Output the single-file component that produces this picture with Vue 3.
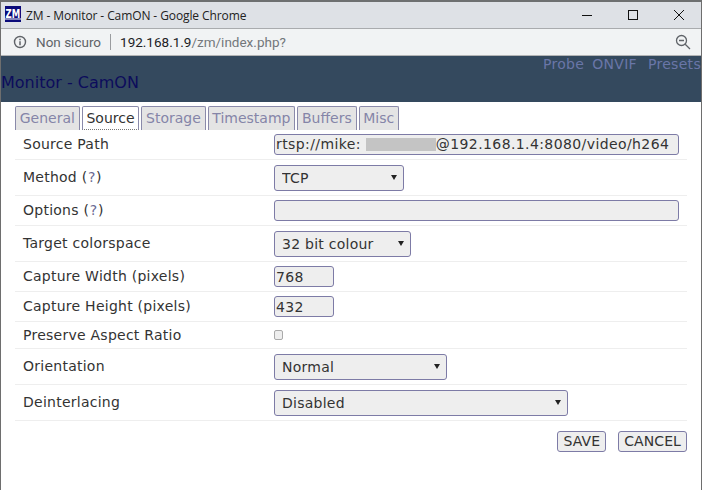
<template>
  <div class="window">
    <div class="titlebar">
      <svg class="zm-logo" width="16" height="16" viewBox="0 0 16 16">
        <rect width="16" height="16" fill="#0a0a7a" />
        <rect y="12.500" width="16" height="1" fill="#fff" />
        <text x="0.500" y="8.400" transform="scale(1 1.400)" class="zm-text">ZM</text>
      </svg>
      <span class="title">ZM - Monitor - CamON - Google Chrome</span>
      <div class="win-btns">
        <svg width="12" height="12" viewBox="0 0 12 12"><path d="M1 6.500h10" stroke="#111" fill="none" /></svg>
        <svg width="12" height="12" viewBox="0 0 12 12"><rect x="1.500" y="1.500" width="9" height="9" stroke="#111" fill="none" /></svg>
        <svg width="12" height="12" viewBox="0 0 12 12"><path d="M1 1l10 10M11 1L1 11" stroke="#111" fill="none" /></svg>
      </div>
    </div>
    <div class="addressbar">
      <svg class="info" width="14" height="14" viewBox="0 0 14 14">
        <circle cx="7" cy="7" r="5.500" stroke="#5f6368" stroke-width="1.400" fill="none" />
        <path d="M7 6.200v4M7 3.800v1.400" stroke="#5f6368" stroke-width="1.500" fill="none" />
      </svg>
      <span class="not-secure">Non sicuro</span>
      <span class="divider"></span>
      <span class="url"><span class="host">192.168.1.9</span>/zm/index.php?</span>
      <svg class="zoom-out" width="16" height="16" viewBox="0 0 16 16">
        <circle cx="6.500" cy="6.500" r="5" stroke="#5f6368" stroke-width="1.300" fill="none" />
        <path d="M4 6.500h5M10.200 10.200L15 15" stroke="#5f6368" stroke-width="1.300" fill="none" />
      </svg>
    </div>

    <div class="page">
      <header class="header">
        <div class="links">
          <a>Probe</a>
          <a>ONVIF</a>
          <a class="presets">Presets</a>
        </div>
        <h2>Monitor - CamON</h2>
      </header>

      <ul class="tabs">
        <li v-for="tab in tabs" :key="tab" :class="{ active: tab === 'Source' }">{{ tab }}</li>
      </ul>

      <div class="form">
        <div class="row r30">
          <span class="label">Source Path</span>
          <div class="field path">rtsp://mike:<span class="redacted"></span>@192.168.1.4:8080/video/h264</div>
        </div>
        <div class="row r36">
          <span class="label">Method (<a>?</a>)</span>
          <div class="sel-wrap w130"><select class="sel"><option>TCP</option></select></div>
        </div>
        <div class="row r30">
          <span class="label">Options (<a>?</a>)</span>
          <input class="field wide" />
        </div>
        <div class="row r36">
          <span class="label">Target colorspace</span>
          <div class="sel-wrap w137"><select class="sel"><option>32 bit colour</option></select></div>
        </div>
        <div class="row r30">
          <span class="label">Capture Width (pixels)</span>
          <input class="field small" value="768" />
        </div>
        <div class="row r30">
          <span class="label">Capture Height (pixels)</span>
          <input class="field small" value="432" />
        </div>
        <div class="row r27">
          <span class="label">Preserve Aspect Ratio</span>
          <input class="check" type="checkbox" />
        </div>
        <div class="row r36">
          <span class="label">Orientation</span>
          <div class="sel-wrap w173"><select class="sel"><option>Normal</option></select></div>
        </div>
        <div class="row r36">
          <span class="label">Deinterlacing</span>
          <div class="sel-wrap w294"><select class="sel"><option>Disabled</option></select></div>
        </div>
      </div>

      <div class="actions">
        <button>SAVE</button>
        <button>CANCEL</button>
      </div>
    </div>
  </div>
</template>

<script setup>
const tabs = ['General', 'Source', 'Storage', 'Timestamp', 'Buffers', 'Misc']
</script>

<style>
html, body {
  margin: 0;
  background: #fff;
}
</style>

<style scoped>
.window {
  width: 702px;
  height: 490px;
  box-sizing: border-box;
  border-left: 1px solid #6e6e6e;
  border-right: 1px solid #6e6e6e;
  border-top: 2px solid #6e7071;
  overflow: hidden;
  background: #fff;
  font-family: "DejaVu Sans", sans-serif;
}

.titlebar {
  height: 27px;
  box-sizing: border-box;
  display: flex;
  align-items: center;
  padding-left: 4px;
  background: #dee1e6;
  border-bottom: 1px solid #a9abae;
  font-family: "Open Sans", sans-serif;
  font-size: 12px;
  letter-spacing: -0.1px;
  color: #222;
}

.zm-logo {
  margin: -2px 5px 0 0;
}

.zm-text {
  font-family: "DejaVu Sans", sans-serif;
  font-size: 8.500px;
  font-weight: bold;
  letter-spacing: 0;
  fill: #fff;
}

.win-btns {
  margin-left: auto;
  display: flex;
  gap: 34px;
  padding-right: 16px;
}

.addressbar {
  height: 27px;
  box-sizing: border-box;
  display: flex;
  align-items: center;
  padding-left: 12px;
  background: #f1f3f4;
  border-bottom: 1px solid #b3b4b5;
  font-family: "Roboto", sans-serif;
  font-size: 13.500px;
}

.not-secure {
  margin-left: 9px;
  color: #5f6368;
}

.divider {
  width: 1px;
  height: 16px;
  margin: 0 9px;
  background: #9a9c9f;
}

.url {
  color: #73777b;
}

.host {
  color: #202124;
}

.zoom-out {
  margin-left: auto;
  margin-right: 10px;
}

.header {
  height: 46px;
  box-sizing: border-box;
  background: #34495e;
}

.links {
  display: flex;
  justify-content: flex-end;
  gap: 8px;
  padding-right: 0;
  font-size: 14px;
  letter-spacing: 0.3px;
  line-height: 16px;
  color: #6a76a8;
}

.presets {
  margin-left: 3px;
}

.header h2 {
  margin: 0;
  font-size: 16px;
  font-weight: normal;
  line-height: 22px;
  color: #0c0c5c;
}

.tabs {
  list-style: none;
  display: flex;
  gap: 2px;
  margin: 0;
  padding: 4px 0 0 14px;
}

.tabs li {
  box-sizing: border-box;
  height: 24px;
  padding: 0 3.750px;
  border: 1px solid #8a8aaa;
  border-bottom: none;
  border-radius: 2px 2px 0 0;
  background: #e4e4e4;
  color: #8585a8;
  font-size: 14px;
  line-height: 22px;
}

.tabs li.active {
  background: #fff;
  color: #333;
  border-bottom: 1px dotted #777;
}

.form {
  margin: 0 14px;
  width: 672px;
}

.row {
  display: grid;
  grid-template-columns: 251px 1fr;
  align-items: center;
  box-sizing: border-box;
  padding-left: 8px;
  border-bottom: 1px solid #eee;
}

.r30 {
  height: 30px;
}

.r36 {
  height: 36px;
}

.r27 {
  height: 27px;
}

.label {
  font-size: 14px;
  letter-spacing: 0.25px;
  color: #333;
  margin-top: -1px;
}

.label a {
  margin: 0 0.500px;
  color: #6a6a94;
}

.field {
  box-sizing: border-box;
  height: 21px;
  padding: 0 1px;
  border: 1px solid #7d7ba6;
  border-radius: 3px;
  background: #eee;
  color: #333;
  font-family: "DejaVu Sans", sans-serif;
  font-size: 14px;
  letter-spacing: 0.4px;
  line-height: 19px;
  outline: none;
}

.path,
.wide {
  width: 405px;
}

.small {
  width: 60px;
}

.redacted {
  display: inline-block;
  width: 70px;
  height: 13px;
  margin-left: 5px;
  vertical-align: -2px;
  background: #c4c4c4;
}

.sel-wrap {
  position: relative;
  height: 26px;
}

.sel-wrap::after {
  content: "";
  position: absolute;
  top: 10px;
  right: 7px;
  border-left: 3px solid transparent;
  border-right: 3px solid transparent;
  border-top: 5px solid #222;
  pointer-events: none;
}

.sel {
  appearance: none;
  box-sizing: border-box;
  display: block;
  width: 100%;
  height: 26px;
  padding: 0 0 0 7px;
  border: 1px solid #7d7ba6;
  border-radius: 3px;
  background-color: #eee;
  color: #333;
  font-family: "DejaVu Sans", sans-serif;
  font-size: 14px;
  letter-spacing: 0.25px;
}

.w130 {
  width: 130px;
}

.w137 {
  width: 137px;
}

.w173 {
  width: 173px;
}

.w294 {
  width: 294px;
}

.check {
  appearance: none;
  box-sizing: border-box;
  width: 9px;
  height: 10px;
  margin: 0;
  border: 1px solid #aaa;
  border-radius: 2px;
  background: #eee;
}

.actions {
  display: flex;
  justify-content: flex-end;
  gap: 12px;
  width: 672px;
  margin: 10px 14px 0;
}

.actions button {
  box-sizing: border-box;
  height: 21px;
  padding: 0 5px;
  border: 1px solid #7d7ba6;
  border-radius: 3px;
  background: #eee;
  color: #333;
  font-family: "DejaVu Sans", sans-serif;
  font-size: 14px;
  letter-spacing: 0.1px;
  line-height: 19px;
}
</style>
